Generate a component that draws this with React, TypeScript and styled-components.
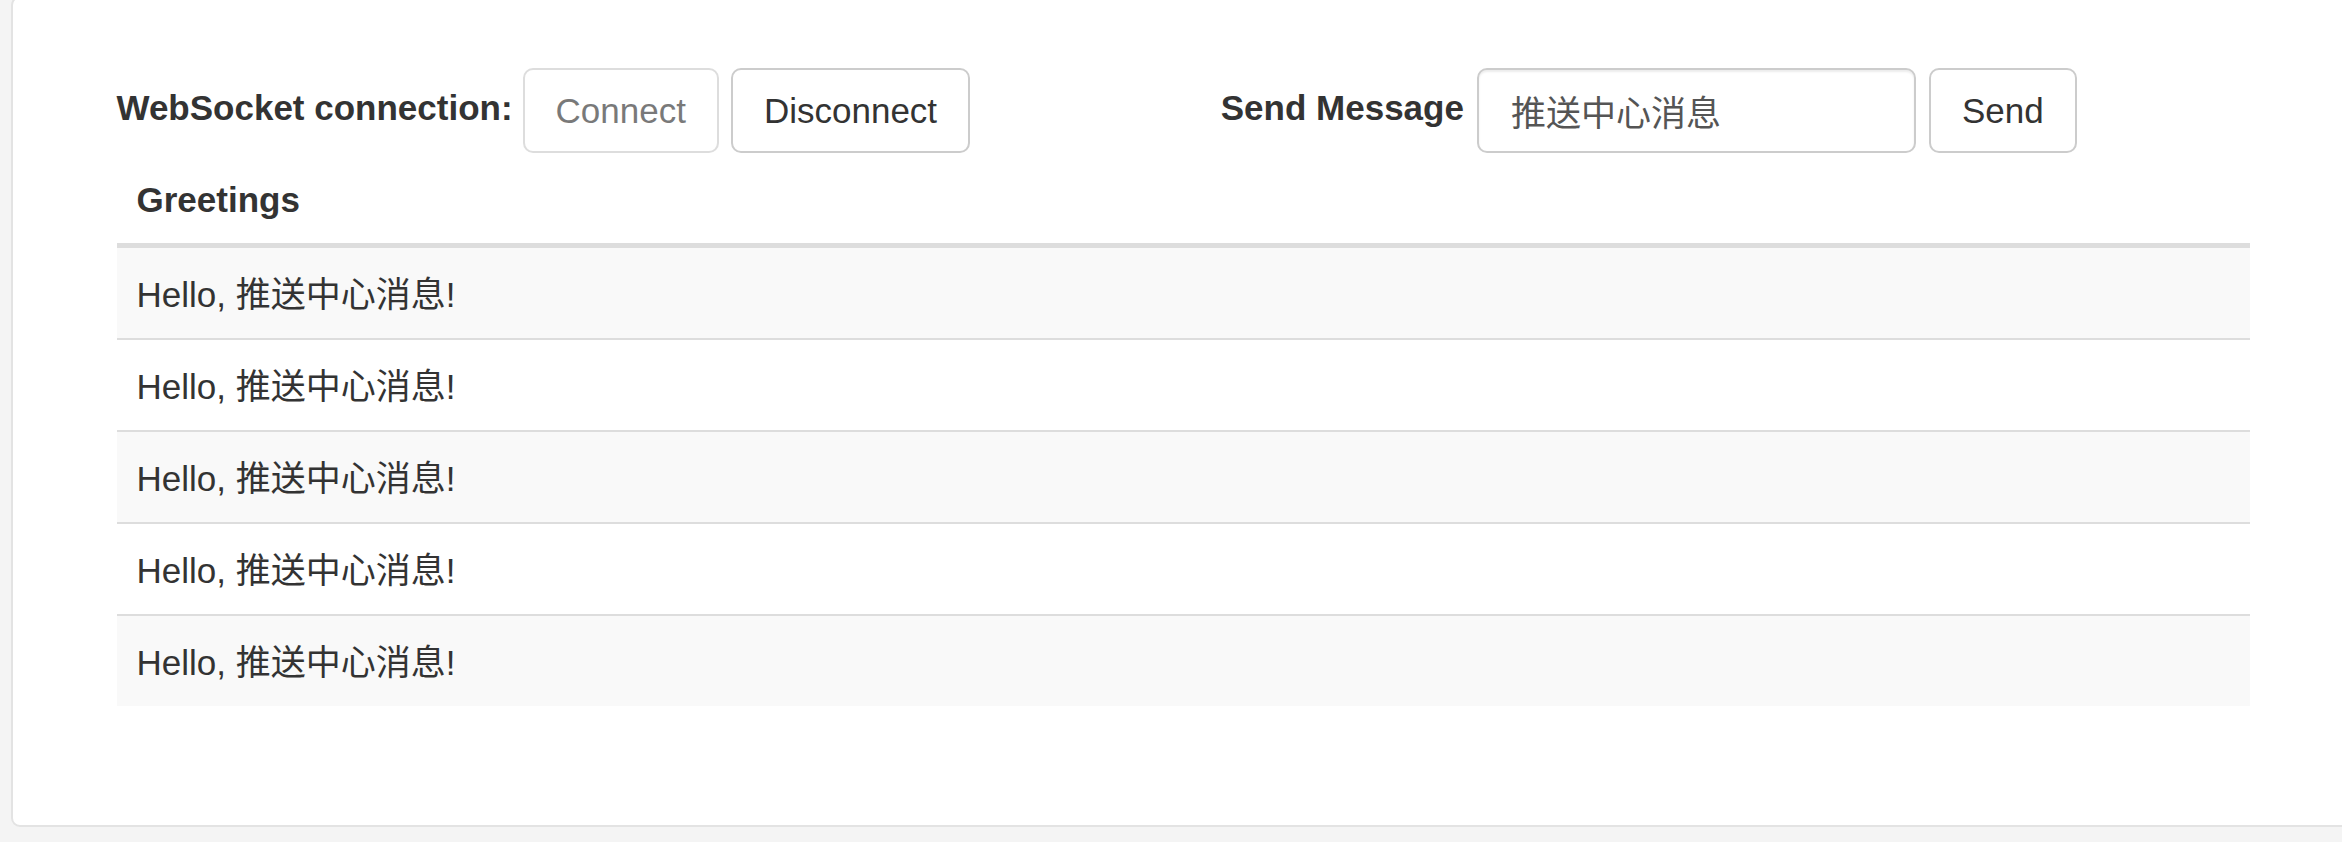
import React, { useState } from "react";
import styled, { createGlobalStyle } from "styled-components";

const GlobalStyle = createGlobalStyle`
  html, body {
    margin: 0;
    padding: 0;
    background: #f4f4f4;
    overflow: hidden;
  }
  body {
    font-family: "Liberation Sans", "Noto Sans CJK SC", Arial, sans-serif;
    font-size: 35px;
    line-height: 50px;
    color: #333;
  }
  * { box-sizing: border-box; }
`;

const Card = styled.div`
  margin: -4px 0 0 11px;
  width: 2349px;
  background: #fff;
  border: 2px solid #e3e3e3;
  border-radius: 9px;
  padding: 70px 108px 119px 103.5px;
`;

const Toolbar = styled.div`
  display: grid;
  grid-template-columns: 1fr 1fr;
  column-gap: 75px;
`;

const FormGroup = styled.form`
  display: flex;
  align-items: center;
  height: 85px;
`;

const Label = styled.label<{ $gap: number }>`
  font-weight: bold;
  padding-bottom: 6px;
  margin-right: ${(p) => p.$gap}px;
  white-space: nowrap;
`;

const Button = styled.button<{ $gapLeft?: number }>`
  height: 85px;
  padding: 0 31px;
  margin-left: ${(p) => p.$gapLeft ?? 0}px;
  font-family: inherit;
  font-size: 35px;
  line-height: 50px;
  color: #333;
  background: #fff;
  border: 2px solid #ccc;
  border-radius: 10px;
  cursor: pointer;
  white-space: nowrap;

  &:disabled {
    opacity: 0.65;
    cursor: not-allowed;
  }
`;

const TextInput = styled.input`
  width: 439px;
  height: 85px;
  padding: 0 32px;
  font-family: inherit;
  font-size: 35px;
  line-height: 50px;
  color: #555;
  background: #fff;
  border: 2px solid #ccc;
  border-radius: 10px;
  box-shadow: inset 0 2px 2px rgba(0, 0, 0, 0.075);
  outline: none;
`;

const Table = styled.table`
  width: 100%;
  border-collapse: separate;
  border-spacing: 0;
`;

const HeadCell = styled.th`
  text-align: left;
  font-weight: bold;
  padding: 22px 20px 18px;
  line-height: 50px;
  border-bottom: 5px solid #ddd;
`;

const Row = styled.tr<{ $striped: boolean }>`
  background: ${(p) => (p.$striped ? "#f9f9f9" : "transparent")};
`;

const Cell = styled.td<{ $first: boolean }>`
  padding: 22px 20px 18px;
  line-height: 50px;
  border-top: ${(p) => (p.$first ? "0" : "2px solid #ddd")};
`;

export default function App() {
  const [message, setMessage] = useState("推送中心消息");
  const greetings = Array.from({ length: 5 }, () => "Hello, 推送中心消息!");

  return (
    <>
      <GlobalStyle />
      <Card>
        <Toolbar>
          <FormGroup onSubmit={(e) => e.preventDefault()}>
            <Label $gap={10} htmlFor="connect">WebSocket connection:</Label>
            <Button id="connect" type="button" disabled>
              Connect
            </Button>
            <Button id="disconnect" type="button" $gapLeft={12}>
              Disconnect
            </Button>
          </FormGroup>
          <FormGroup onSubmit={(e) => e.preventDefault()}>
            <Label $gap={13} htmlFor="name">Send Message</Label>
            <TextInput
              id="name"
              type="text"
              value={message}
              onChange={(e) => setMessage(e.target.value)}
            />
            <Button id="send" type="submit" $gapLeft={13}>
              Send
            </Button>
          </FormGroup>
        </Toolbar>
        <Table>
          <thead>
            <tr>
              <HeadCell>Greetings</HeadCell>
            </tr>
          </thead>
          <tbody>
            {greetings.map((g, i) => (
              <Row key={i} $striped={i % 2 === 0}>
                <Cell $first={i === 0}>{g}</Cell>
              </Row>
            ))}
          </tbody>
        </Table>
      </Card>
    </>
  );
}
